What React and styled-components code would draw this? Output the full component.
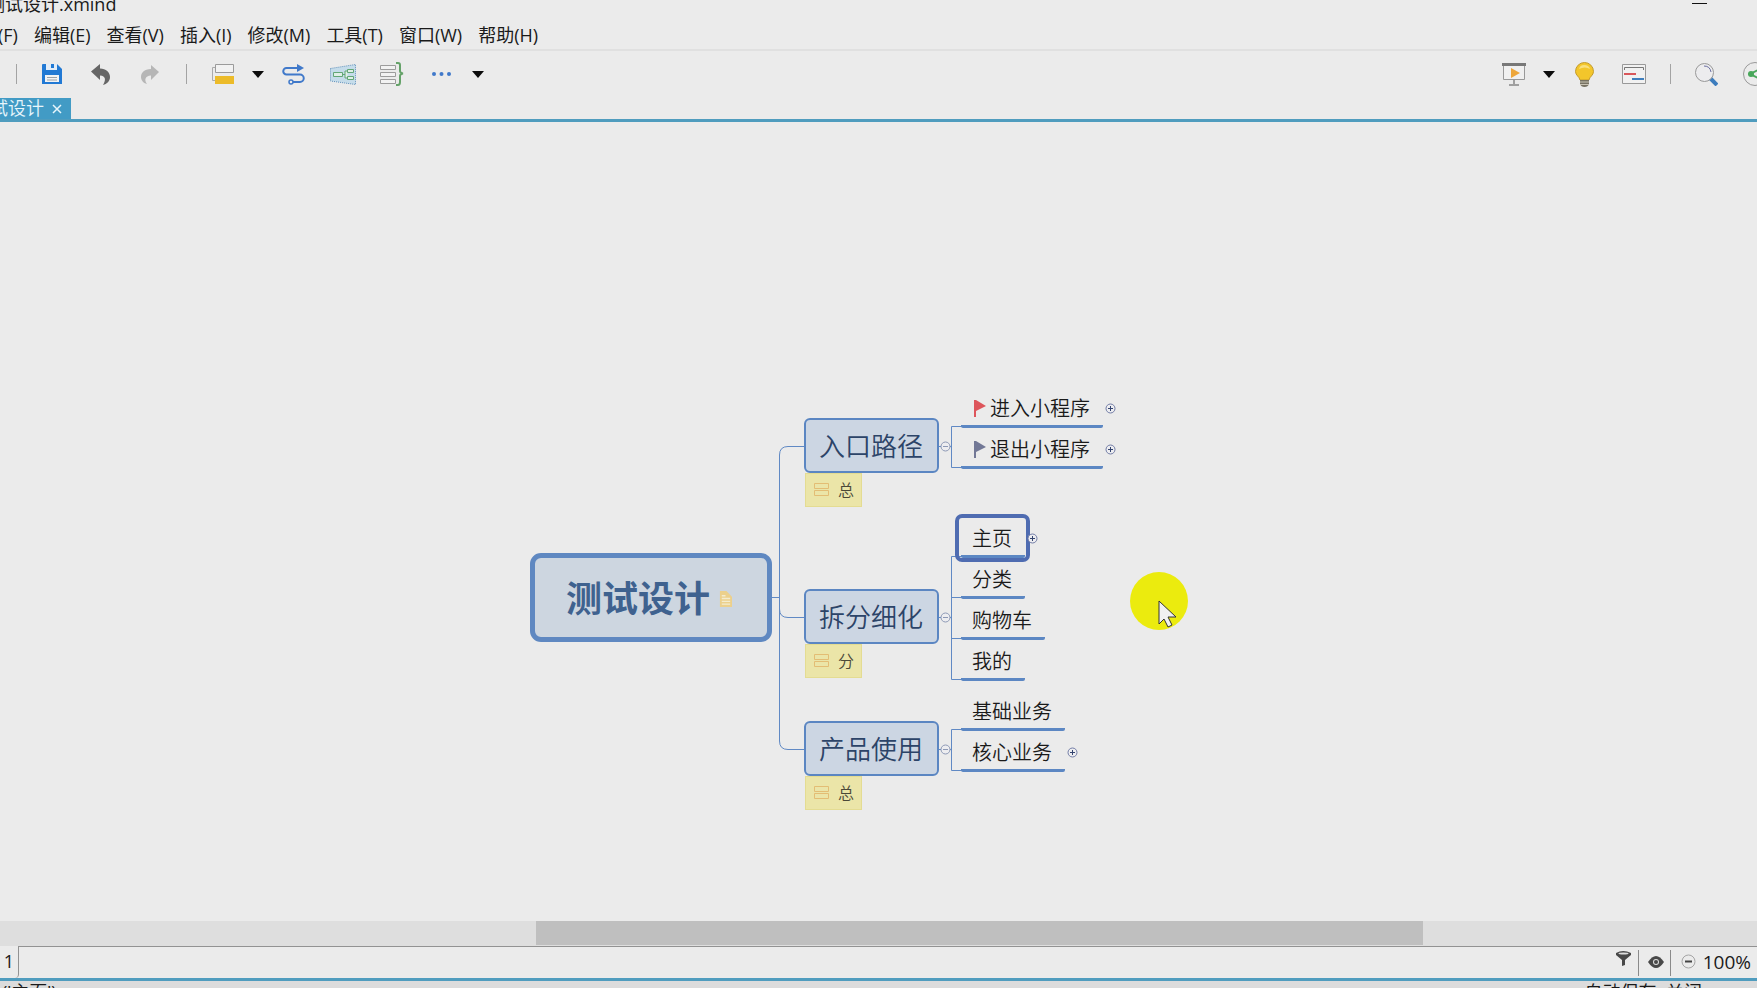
import styled, { createGlobalStyle } from "styled-components";

const GlobalStyle = createGlobalStyle`
  * {
    box-sizing: border-box;
  }
  body {
    margin: 0;
    background: #ebebeb;
    color: #1a1a1a;
    font-family: "Open Sans", "Noto Sans CJK SC", sans-serif;
    font-size: 18px;
    font-weight: 400;
    overflow: hidden;
  }
  button {
    padding: 0;
    border: 0;
    background: none;
    color: inherit;
    font: inherit;
  }
  svg {
    display: block;
  }
`;

const Window = styled.div`
  display: flex;
  flex-direction: column;
  height: 100vh;
  overflow: hidden;
`;

const TitleBar = styled.header`
  display: flex;
  justify-content: space-between;
  height: 20px;
  padding-right: 50px;
`;

const Title = styled.h1`
  margin: -8px 0 0 -13px;
  font-size: 18px;
  font-weight: inherit;
  line-height: 24px;
  white-space: nowrap;
`;

const Minimize = styled.button`
  width: 15px;
  height: 4px;
  border-bottom: 1px solid #111;
`;

const MenuBar = styled.nav`
  display: flex;
  gap: 16px;
  height: 31px;
  margin-left: -38px;
  border-bottom: 2px solid #e0e0e0;
`;

const MenuItem = styled.button`
  line-height: 29px;
  padding-top: 1px;
  white-space: nowrap;
`;

const ToolBar = styled.div`
  display: flex;
  align-items: center;
  height: 47px;
  padding: 0 0 1px 16px;
`;

const ToolButton = styled.button`
  display: flex;
  flex: none;
  justify-content: center;
  width: ${(props) => props.$width || 49}px;
`;

const Separator = styled.div`
  flex: none;
  width: 1px;
  height: 20px;
  background: #a3a3a3;
`;

const ToolGroup = styled.div`
  display: flex;
  align-items: center;
  padding: 0 ${(props) => props.$after || 0}px 0 ${(props) => props.$pad || 0}px;
`;

const ShareButton = styled(ToolButton)`
  margin-right: -10px;
`;

const Spacer = styled.div`
  flex: 1;
`;

const TabBar = styled.div`
  display: flex;
  height: 24px;
  border-bottom: 3px solid #4f9cbe;
`;

const Tab = styled.div`
  display: flex;
  align-items: center;
  gap: 8px;
  margin-left: -28px;
  padding-right: 9px;
  background: #429bc5;
  color: #e8f6fc;
  font-weight: 350;
  line-height: 21px;
  white-space: nowrap;
`;

const Canvas = styled.main`
  position: relative;
  flex: 1;
  min-height: 0;
  font-weight: 350;
  overflow: hidden;
`;

const Links = styled.svg`
  position: absolute;
  top: 0;
  left: 0;
  fill: none;
  stroke: #6089c4;
`;

const RootTopic = styled.div`
  position: absolute;
  top: 431px;
  left: 530px;
  display: flex;
  align-items: center;
  gap: 9px;
  height: 89px;
  padding: 2px 35px 0 31px;
  border: 5px solid #5f88c1;
  border-radius: 11px;
  background: #cdd6e0;
  color: #3f628f;
  font-size: 36px;
  font-weight: 700;
  line-height: 40px;
  white-space: nowrap;
`;

const MainTopic = styled.div`
  position: absolute;
  top: ${(props) => props.$y}px;
  left: 804px;
  height: 55px;
  padding: 0 14px 0 13px;
  border: 2px solid #5b86c2;
  border-radius: 6px;
  background: #ccd6e3;
  color: #2c4468;
  font-size: 26px;
  line-height: 53px;
  white-space: nowrap;
`;

const Label = styled.div`
  position: absolute;
  top: ${(props) => props.$y}px;
  left: 805px;
  display: flex;
  align-items: center;
  gap: 9px;
  width: 57px;
  height: 34px;
  padding: 0 0 2px 8px;
  border: 1px solid #e4dc92;
  background: #ebe5a8;
  color: #4a4838;
  font-size: 16px;
`;

const SubTopic = styled.div`
  position: absolute;
  top: ${(props) => props.$y}px;
  left: 961px;
  display: flex;
  align-items: center;
  gap: 4px;
  height: 37px;
  padding: 1px 13px 0 ${(props) => (props.$flagged ? 13 : 11)}px;
  border-bottom: 3px solid #5c87c3;
  border-radius: 2px;
  font-size: 20px;
  line-height: 34px;
  white-space: nowrap;
`;

const Selection = styled.div`
  position: absolute;
  top: 392px;
  left: 955px;
  width: 75px;
  height: 48px;
  border: 4px solid #4f6cb1;
  border-radius: 7px;
`;

const Fold = styled.button`
  position: absolute;
  top: ${(props) => props.$y}px;
  left: ${(props) => props.$x}px;
`;

const Pointer = styled.div`
  position: absolute;
  top: 450px;
  left: 1130px;
  width: 58px;
  height: 58px;
  padding: 28px 0 0 28px;
  border-radius: 50%;
  background: #ebeb0e;
`;

const ScrollTrack = styled.div`
  height: 25px;
  background: #dedede;
`;

const ScrollThumb = styled.div`
  width: 50.5%;
  height: 24px;
  margin-left: 30.5%;
  background: #bfbfbf;
`;

const SheetBar = styled.div`
  display: flex;
  align-items: center;
  height: 32px;
  border-top: 1px solid #929292;
`;

const SheetTab = styled.button`
  width: 19px;
  height: 32px;
  margin-top: -2px;
  padding-bottom: 2px;
  border-right: 1px solid #929292;
  border-radius: 0 0 4px 0;
  background: #ebebeb;
  text-align: center;
`;

const SheetTool = styled.button`
  display: flex;
  align-items: ${(props) => props.$align || "center"};
  justify-content: center;
  width: 32px;
  height: 26px;
  padding: 1px 0 2px 3px;
  border-right: 1px solid #8a8a8a;
`;

const Zoom = styled.div`
  display: flex;
  align-items: center;
  gap: 7px;
  padding: 0 6px 2px 10px;
  font-size: 19px;
`;

const StatusBar = styled.footer`
  display: flex;
  justify-content: space-between;
  height: 10px;
  padding: 0 55px 0 2px;
  border-top: 3px solid #4f9cbe;
  background: #dcdcdc;
  line-height: 22px;
  overflow: hidden;
`;

const menus = [
  "文件(F)",
  "编辑(E)",
  "查看(V)",
  "插入(I)",
  "修改(M)",
  "工具(T)",
  "窗口(W)",
  "帮助(H)",
];

const mainTopics = [
  { text: "入口路径", label: "总", y: 296 },
  { text: "拆分细化", label: "分", y: 467 },
  { text: "产品使用", label: "总", y: 599 },
];

const subTopics = [
  { text: "进入小程序", y: 269, flag: "#dd555b", foldX: 1105 },
  { text: "退出小程序", y: 310, flag: "#727896", foldX: 1105 },
  { text: "主页", y: 399, foldX: 1027 },
  { text: "分类", y: 440 },
  { text: "购物车", y: 481 },
  { text: "我的", y: 522 },
  { text: "基础业务", y: 572 },
  { text: "核心业务", y: 613, foldX: 1067 },
];

function Arrow() {
  return (
    <svg width="12" height="7" viewBox="0 0 12 7">
      <path d="M0 0h12L6 7z" fill="#0c0c0c" />
    </svg>
  );
}

function SaveIcon() {
  return (
    <svg width="20" height="20" viewBox="0 0 20 20">
      <path d="M1 0h14l5 5v15H0V1q0-1 1-1z" fill="#2179d4" />
      <path d="M4 0h11v6H4z" fill="#e2edf8" />
      <path d="M9 0h3v4H9z" fill="#2179d4" />
      <path d="M3 11h14v7H3z" fill="#f1f3f5" />
      <path d="M5 13.5h10M5 16h10" stroke="#9aa1a8" />
    </svg>
  );
}

function UndoIcon() {
  return (
    <svg width="19" height="21" viewBox="0 0 19 21">
      <path
        d="M0 7.5 9 0v4.5c6 0 10 4 10 8.5 0 4-3 7-7 8 3-5 3-9-3-9.500V16z"
        fill="#666"
      />
    </svg>
  );
}

function RedoIcon() {
  return (
    <svg width="18" height="19" viewBox="0 0 18 19">
      <path
        d="M18 7 10 0v4C3 4 0 8 0 12c0 3 2 6 6 7-3-4-2-8 4-8.500V15z"
        fill="#b6b6b6"
      />
    </svg>
  );
}

function TopicIcon() {
  return (
    <svg width="22" height="20" viewBox="0 0 22 20" fill="none">
      <path d="M4 3.5H.5v13H4" stroke="#aaa" />
      <path d="M3.5.5h18v8h-18z" fill="#f2f2f2" stroke="#9b9b9b" />
      <path d="M3 12h19v8H3z" fill="#ecbb29" />
    </svg>
  );
}

function RelationIcon() {
  return (
    <svg width="23" height="21" viewBox="0 0 23 21" fill="none">
      <path
        d="M17 4H4.5a3.25 3.25 0 0 0 0 6.500H18a3.750 3.750 0 0 1 0 7.500h-7"
        stroke="#4079ca"
        strokeWidth="2"
      />
      <path d="m15 0 7 4-7 4z" fill="#4079ca" />
      <circle cx="9" cy="18" r="2" stroke="#4079ca" strokeWidth="1.5" />
    </svg>
  );
}

function BoundaryIcon() {
  return (
    <svg width="26" height="21" viewBox="0 0 26 21" fill="none">
      <path
        d="M.5 4.5 25.5.5v20L.5 17z"
        fill="#c5dcea"
        stroke="#6292bd"
        strokeDasharray="1 1"
      />
      <path
        d="M3.5 8.5h9v4h-9zM17.5 5.5h6v3h-6zM17.5 12.5h6v3h-6zM12.5 10.5H15M17.5 7H15v7h2.5"
        fill="#e0efe7"
        stroke="#62a777"
      />
    </svg>
  );
}

function SummaryIcon() {
  return (
    <svg width="24" height="24" viewBox="0 0 24 24" fill="none">
      <path
        d="M.5 3.5h15v4H.5zM.5 10.5h15v4H.5zM.5 17.5h15v4H.5z"
        fill="#f2f2f2"
        stroke="#9c9c9c"
      />
      <path
        d="M16 1h2q2 0 2 2v6q0 2 3 2.500Q20 12 20 14v6q0 3-2 3h-2"
        stroke="#65a269"
        strokeWidth="2"
      />
    </svg>
  );
}

function MoreIcon() {
  return (
    <svg width="19" height="4" viewBox="0 0 19 4" fill="#4079ca">
      <circle cx="2" cy="2" r="2" />
      <circle cx="9.5" cy="2" r="2" />
      <circle cx="17" cy="2" r="2" />
    </svg>
  );
}

function PresentIcon() {
  return (
    <svg width="24" height="23" viewBox="0 0 24 23" fill="none">
      <path d="M1.5 2.5h21v14h-21z" fill="#f0f0f0" stroke="#999" />
      <path d="M0 0h24v3H0z" fill="#787878" />
      <path d="m9 5 9 5-9 5z" fill="#eda63a" />
      <path d="M12 17v4M7 22h10" stroke="#888" strokeWidth="1.5" />
    </svg>
  );
}

function BulbIcon() {
  return (
    <svg width="19" height="25" viewBox="0 0 19 25">
      <path
        d="M9.5.5a9 9 0 0 0-9 9c0 4 4 5 4.500 8.500h9c.5-3.500 4.500-4.500 4.500-8.500a9 9 0 0 0-9-9z"
        fill="#f3c62b"
        stroke="#c49b2c"
      />
      <path d="M4 7q1-4 5-4 5 0 6 4-5-3-11 0z" fill="#f9e07d" />
      <path d="M5 18h9v4q-1 3-4.500 3T5 22z" fill="#777263" />
      <path d="M5 20h9M5 22.5h9" stroke="#c9c4b5" />
    </svg>
  );
}

function GanttIcon() {
  return (
    <svg width="24" height="20" viewBox="0 0 24 20" fill="none">
      <path d="M.5.5h23v19H.5z" fill="#f1f1f1" stroke="#999" />
      <path d="M2.5 6V3.5h19V6" stroke="#777" />
      <path d="M2 10h12" stroke="#d9575b" strokeWidth="2" />
      <path d="M10 15h12" stroke="#3f7fbe" strokeWidth="2" />
    </svg>
  );
}

function SearchIcon() {
  return (
    <svg width="23" height="23" viewBox="0 0 23 23" fill="none">
      <path d="m15 15 7 7" stroke="#3c7cbd" strokeWidth="4" />
      <circle cx="9.5" cy="9.5" r="9" fill="#ececee" stroke="#999" />
      <path d="M9 3q6 0 7 6" stroke="#696c9f" />
    </svg>
  );
}

function ShareIcon() {
  return (
    <svg width="24" height="24" viewBox="0 0 24 24" fill="none">
      <circle cx="12" cy="12" r="11.5" stroke="#999" />
      <path d="m17 7-10 5 10 5" stroke="#48a75a" strokeWidth="2" />
      <circle cx="8" cy="12" r="3" fill="#48a75a" />
      <circle cx="17" cy="7" r="3" fill="#48a75a" />
      <circle cx="17" cy="17" r="3" fill="#48a75a" />
    </svg>
  );
}

function FoldIcon({ plus }) {
  return (
    <svg width="11" height="11" viewBox="0 0 11 11" fill="none">
      <circle
        cx="5.5"
        cy="5.5"
        r="4.5"
        fill="#ededf0"
        stroke={plus ? "#707ba5" : "#8d99b5"}
      />
      <path
        d={plus ? "M3 5.5h5M5.5 3v5" : "M3 5.5h5"}
        stroke={plus ? "#33446f" : "#8d99b5"}
      />
    </svg>
  );
}

function App() {
  return (
    <>
      <GlobalStyle />
      <Window>
        <TitleBar>
          <Title>测试设计.xmind</Title>
          <Minimize aria-label="最小化" />
        </TitleBar>
        <MenuBar>
          {menus.map((menu) => (
            <MenuItem key={menu}>{menu}</MenuItem>
          ))}
        </MenuBar>
        <ToolBar>
          <Separator />
          <ToolGroup $pad={10}>
            <ToolButton aria-label="保存">
              <SaveIcon />
            </ToolButton>
            <ToolButton aria-label="撤销">
              <UndoIcon />
            </ToolButton>
            <ToolButton aria-label="重做">
              <RedoIcon />
            </ToolButton>
          </ToolGroup>
          <ToolGroup $pad={12} $after={11}>
            <Separator />
          </ToolGroup>
          <ToolButton aria-label="主题">
            <TopicIcon />
          </ToolButton>
          <ToolButton aria-label="主题选项" $width={22}>
            <Arrow />
          </ToolButton>
          <ToolButton aria-label="联系">
            <RelationIcon />
          </ToolButton>
          <ToolButton aria-label="外框">
            <BoundaryIcon />
          </ToolButton>
          <ToolButton aria-label="概要">
            <SummaryIcon />
          </ToolButton>
          <ToolButton aria-label="更多" $width={51}>
            <MoreIcon />
          </ToolButton>
          <ToolButton aria-label="更多选项" $width={22}>
            <Arrow />
          </ToolButton>
          <Spacer />
          <ToolButton aria-label="演示">
            <PresentIcon />
          </ToolButton>
          <ToolButton aria-label="演示选项" $width={22}>
            <Arrow />
          </ToolButton>
          <ToolButton aria-label="头脑风暴">
            <BulbIcon />
          </ToolButton>
          <ToolButton aria-label="甘特图">
            <GanttIcon />
          </ToolButton>
          <ToolGroup $pad={12} $after={11}>
            <Separator />
          </ToolGroup>
          <ToolGroup $after={12}>
            <ToolButton aria-label="搜索">
              <SearchIcon />
            </ToolButton>
          </ToolGroup>
          <ShareButton aria-label="分享" $width={24}>
            <ShareIcon />
          </ShareButton>
        </ToolBar>
        <TabBar>
          <Tab>
            测试设计
            <button aria-label="关闭">
              <svg width="10" height="10" viewBox="0 0 10 10">
                <path d="m1 1 8 8M9 1 1 9" stroke="#e8f6fc" strokeWidth="1.5" />
              </svg>
            </button>
          </Tab>
        </TabBar>
        <Canvas>
          <Links width="1200" height="700" viewBox="0 0 1200 700">
            <path d="M772 475.5h7M804 324.5h-16q-8.500 0-8.500 8.500v286q0 8.500 8.500 8.500h16M779.5 487q0 8.500 8.500 8.500h16" />
            <path d="M939 324.5h12M962 304.5h-10.500v41H962" />
            <path d="M939 495.5h12M962 434.5h-10.500v123H962M951.5 475.5H962M951.5 516.5H962" />
            <path d="M939 627.5h12M962 607.5h-10.500v41H962" />
          </Links>
          <RootTopic>
            测试设计
            <svg width="13" height="16" viewBox="0 0 14 17">
              <path d="M1 0h7l6 6v11H1z" fill="#ecd08c" />
              <path
                d="M3 5h4M3 8h9M3 11h9M3 14h9"
                stroke="#f4ecce"
                strokeWidth="1.5"
              />
            </svg>
          </RootTopic>
          {mainTopics.map((topic) => (
            <div key={topic.y}>
              <MainTopic $y={topic.y}>{topic.text}</MainTopic>
              <Label $y={topic.y + 55}>
                <svg width="15" height="13" viewBox="0 0 15 13" fill="none">
                  <path d="M.5.5h14v5H.5zM.5 7.5h14v5H.5z" stroke="#e3bd74" />
                </svg>
                {topic.label}
              </Label>
              <Fold aria-label="收起" $x={940} $y={topic.y + 23}>
                <FoldIcon />
              </Fold>
            </div>
          ))}
          <Selection />
          {subTopics.map((topic) => (
            <div key={topic.text}>
              <SubTopic $y={topic.y} $flagged={topic.flag}>
                {topic.flag && (
                  <svg width="12" height="17" viewBox="0 0 12 17">
                    <path d="M0 0h2l10 6-10 5v6H0z" fill={topic.flag} />
                  </svg>
                )}
                {topic.text}
              </SubTopic>
              {topic.foldX && (
                <Fold aria-label="展开" $x={topic.foldX} $y={topic.y + 12}>
                  <FoldIcon plus />
                </Fold>
              )}
            </div>
          ))}
          <Pointer>
            <svg width="20" height="29" viewBox="0 0 20 29">
              <path
                d="M1 1v23l5-5 4 8 4-2-4-8h8z"
                fill="#f1f1f1"
                stroke="#333"
              />
            </svg>
          </Pointer>
        </Canvas>
        <ScrollTrack>
          <ScrollThumb />
        </ScrollTrack>
        <SheetBar>
          <SheetTab>1</SheetTab>
          <Spacer />
          <SheetTool aria-label="筛选" $align="flex-start">
            <svg width="15" height="15" viewBox="0 0 15 15">
              <path d="M0 2q7-4 15 0v2L9 9v5l-3 1V9L0 4z" fill="#484848" />
              <ellipse cx="7.5" cy="2.5" rx="5" ry="1" fill="#ddd" />
            </svg>
          </SheetTool>
          <SheetTool aria-label="显示">
            <svg width="16" height="12" viewBox="0 0 16 12">
              <path d="M0 6q8-12 16 0-8 12-16 0z" fill="#484848" />
              <circle cx="8" cy="6" r="3" fill="#ddd" />
              <circle cx="8" cy="6" r="2" fill="#484848" />
            </svg>
          </SheetTool>
          <Zoom>
            <button aria-label="缩小">
              <svg width="15" height="15" viewBox="0 0 15 15" fill="none">
                <circle cx="7.5" cy="7.5" r="6.5" stroke="#a5a5a5" />
                <path d="M4 7.5h7" stroke="#444" strokeWidth="2" />
              </svg>
            </button>
            100%
          </Zoom>
        </SheetBar>
        <StatusBar>
          <span>('主页')</span>
          <span>自动保存: 关闭</span>
        </StatusBar>
      </Window>
    </>
  );
}

export default App;
